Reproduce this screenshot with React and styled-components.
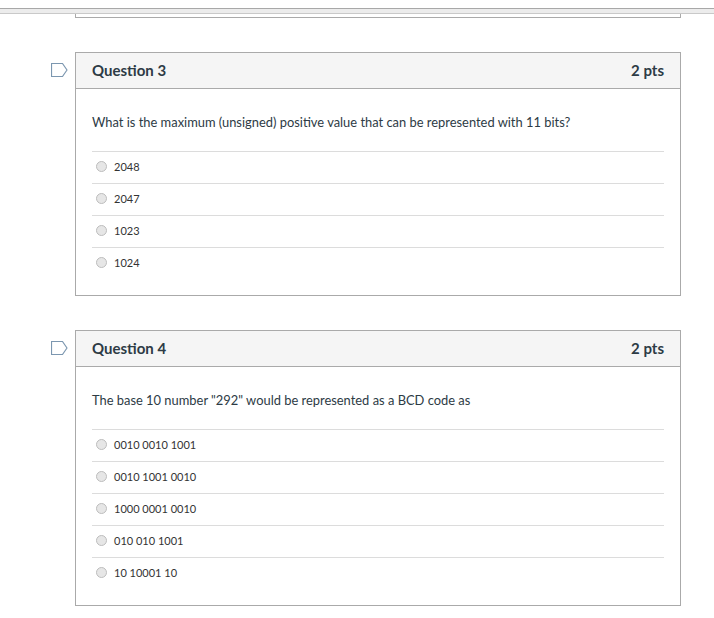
import React from 'react'
import styled, { createGlobalStyle } from 'styled-components'

const GlobalStyle = createGlobalStyle`
  body {
    margin: 0;
    background: #fff;
    font-family: Lato, "Open Sans", sans-serif;
    color: #2d3b45;
  }
`

const questions = [
  {
    id: 3,
    points: 2,
    text: 'What is the maximum (unsigned) positive value that can be represented with 11 bits?',
    answers: ['2048', '2047', '1023', '1024'],
  },
  {
    id: 4,
    points: 2,
    text: 'The base 10 number "292" would be represented as a BCD code as',
    answers: ['0010 0010 1001', '0010 1001 0010', '1000 0001 0010', '010 010 1001', '10 10001 10'],
  },
]

function Flag() {
  return (
    <FlagIcon width="17" height="14" viewBox="0 0 17 14">
      <path
        d="M0.5 0.5 H11.5 L16 7 L11.5 13.5 H0.5 Z"
        fill="none"
        stroke="#7c97b0"
        strokeWidth="1.2"
        strokeLinejoin="round"
      />
    </FlagIcon>
  )
}

function Question({ id, points, text, answers }) {
  return (
    <QuestionRow>
      <Gutter>
        <Flag />
      </Gutter>
      <Card>
        <Header>
          <Title>Question {id}</Title>
          <Points>{points} pts</Points>
        </Header>
        <Body>
          <Prompt>{text}</Prompt>
          <AnswerList>
            {answers.map(a => (
              <Answer key={a}>
                <Radio />
                <AnswerText>{a}</AnswerText>
              </Answer>
            ))}
          </AnswerList>
        </Body>
      </Card>
    </QuestionRow>
  )
}

export default function App() {
  return (
    <Page>
      <GlobalStyle />
      <TopBand />
      <PrevCardEnd />
      <Questions>
        {questions.map(q => (
          <Question key={q.id} {...q} />
        ))}
      </Questions>
    </Page>
  )
}

const Page = styled.div`
  width: 714px;
  padding-top: 8px;
`

const TopBand = styled.div`
  height: 4px;
  border-top: 1px solid #a8a8a8;
  border-bottom: 1px solid #c9c9c9;
  background: #ececec;
`

const PrevCardEnd = styled.div`
  margin-left: 75px;
  width: 604px;
  height: 3px;
  border: 1px solid #aaa;
  border-top: none;
`

const Questions = styled.div`
  display: flex;
  flex-direction: column;
  gap: 34px;
  margin-top: 34px;
`

const QuestionRow = styled.div`
  display: flex;
  align-items: flex-start;
`

const Gutter = styled.div`
  width: 75px;
  display: flex;
  justify-content: flex-end;
  padding-right: 7px;
  padding-top: 11px;
  box-sizing: border-box;
`

const FlagIcon = styled.svg`
  display: block;
`

const Card = styled.div`
  width: 606px;
  box-sizing: border-box;
  border: 1px solid #aaa;
`

const Header = styled.div`
  display: flex;
  justify-content: space-between;
  align-items: center;
  height: 36px;
  padding: 0 16px 1px;
  box-sizing: border-box;
  background: #f5f5f5;
  border-bottom: 1px solid #aaa;
`

const Title = styled.span`
  font-size: 15px;
  font-weight: 700;
`

const Points = styled.span`
  font-size: 15px;
  font-weight: 700;
`

const Body = styled.div`
  padding: 24px 16px 16px;
`

const Prompt = styled.div`
  font-size: 12.9px;
  line-height: 18px;
  margin-bottom: 20px;
`

const AnswerList = styled.div`
  display: flex;
  flex-direction: column;
`

const Answer = styled.div`
  display: flex;
  align-items: center;
  height: 29px;
  padding: 0 0 2px 4px;
  border-top: 1px solid #dcdcdc;
`

const Radio = styled.span`
  width: 9px;
  height: 9px;
  border-radius: 50%;
  border: 1px solid #bdbdbd;
  background: #e6e6e6;
  margin-right: 7px;
`

const AnswerText = styled.span`
  font-size: 11px;
  color: #333;
`
